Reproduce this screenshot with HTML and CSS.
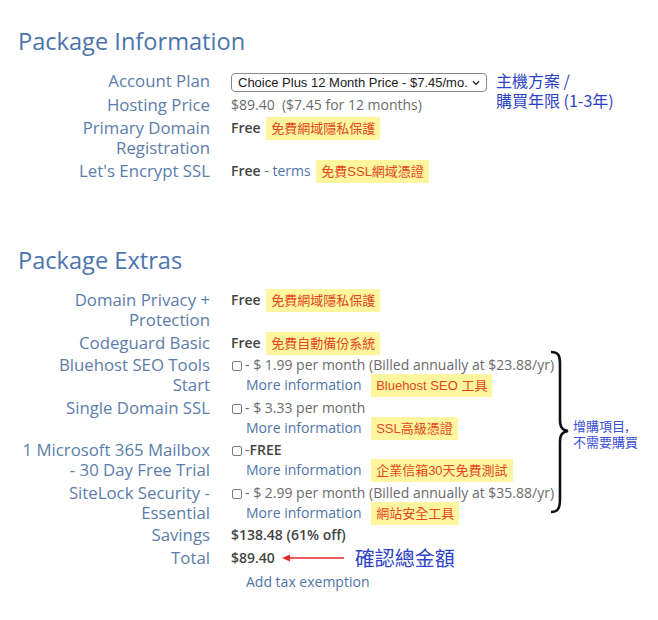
FILE: index.html
```html
<!DOCTYPE html>
<html lang="zh-Hant">
<head>
<meta charset="utf-8">
<title>Package Information</title>
<link rel="stylesheet" href="styles.css">
</head>
<body>
<div class="page">
  <section class="section first">
    <h2 class="title">Package Information</h2>
    <div class="rows">
      <div class="lbl">Account Plan</div>
      <div class="val">
        <div class="select"><span>Choice Plus 12 Month Price - $7.45/mo.</span><svg class="chev" width="8" height="6" viewBox="0 0 8 6"><path d="M1 1.2 L4 4.4 L7 1.2" fill="none" stroke="#333" stroke-width="1.5"/></svg></div>
      </div>
      <div class="lbl">Hosting Price</div>
      <div class="val gray">$89.40&nbsp; ($7.45 for 12 months)</div>
      <div class="lbl">Primary Domain<br>Registration</div>
      <div class="val"><span class="strong">Free</span> <span class="hl">免費網域隱私保護</span></div>
      <div class="lbl">Let's Encrypt SSL</div>
      <div class="val"><span class="strong">Free</span> <span class="gray">-</span> <span class="link">terms</span> <span class="hl">免費SSL網域憑證</span></div>
    </div>
    <div class="note note-plan">主機方案 /<br>購買年限 (1-3年)</div>
  </section>

  <section class="section second">
    <h2 class="title">Package Extras</h2>
    <div class="rows">
      <div class="lbl">Domain Privacy +<br>Protection</div>
      <div class="val"><span class="strong">Free</span> <span class="hl">免費網域隱私保護</span></div>
      <div class="lbl">Codeguard Basic</div>
      <div class="val"><span class="strong">Free</span> <span class="hl">免費自動備份系統</span></div>
      <div class="lbl">Bluehost SEO Tools<br>Start</div>
      <div class="val">
        <div class="gray"><span class="cb"></span>- $ 1.99 per month (Billed annually at $23.88/yr)</div>
        <div class="more"><span class="link">More information</span> <span class="hl">Bluehost SEO 工具</span></div>
      </div>
      <div class="lbl">Single Domain SSL</div>
      <div class="val">
        <div class="gray"><span class="cb"></span>- $ 3.33 per month</div>
        <div class="more"><span class="link">More information</span> <span class="hl">SSL高級憑證</span></div>
      </div>
      <div class="lbl">1 Microsoft 365 Mailbox<br>- 30 Day Free Trial</div>
      <div class="val">
        <div class="gray"><span class="cb"></span>-<span class="strong">FREE</span></div>
        <div class="more"><span class="link">More information</span> <span class="hl">企業信箱30天免費測試</span></div>
      </div>
      <div class="lbl">SiteLock Security -<br>Essential</div>
      <div class="val">
        <div class="gray"><span class="cb"></span>- $ 2.99 per month (Billed annually at $35.88/yr)</div>
        <div class="more"><span class="link">More information</span> <span class="hl">網站安全工具</span></div>
      </div>
      <div class="lbl">Savings</div>
      <div class="val strong">$138.48 (61% off)</div>
      <div class="lbl">Total</div>
      <div class="val total">
        <span class="strong">$89.40</span>
        <svg class="arrow" width="64" height="10" viewBox="0 0 64 10"><path d="M8 5 H63" stroke="#e02a2a" stroke-width="1.6"/><path d="M1 5 L9 1.5 L9 8.5 Z" fill="#e02a2a"/></svg>
        <span class="note-total">確認總金額</span>
      </div>
      <div class="lbl"></div>
      <div class="val taxrow"><span class="link tax">Add tax exemption</span></div>
    </div>
    <svg class="brace" width="24" height="164" viewBox="0 0 24 164"><path d="M2 2 C9 2 11 5 11 14 L11 70 C11 77 13 80 19 81 C13 82 11 85 11 92 L11 149 C11 158 9 162 2 162" fill="none" stroke="#111" stroke-width="2.6"/></svg>
    <div class="note note-extra">增購項目,<br>不需要購買</div>
  </section>
</div>
</body>
</html>
```

FILE: styles.css
```css
* { box-sizing: border-box; }
html, body { margin: 0; padding: 0; background: #fff; }
body {
  font-family: "Open Sans", "Noto Sans CJK TC", sans-serif;
}
.page {
  position: relative;
  width: 658px;
  padding-top: 26px;
}
.section { position: relative; }
.second { margin-top: 64px; }
.title {
  margin: 0 0 15px 18px;
  font-size: 23.6px;
  line-height: 30px;
  font-weight: 400;
  color: #4c74ad;
}
.rows {
  display: grid;
  grid-template-columns: 192px auto;
  column-gap: 21px;
  row-gap: 3px;
  padding-left: 18px;
  align-items: start;
}
.second .rows { row-gap: 2.5px; }
.lbl {
  text-align: right;
  font-size: 16.8px;
  line-height: 20px;
  color: #5b7dab;
  white-space: nowrap;
}
.val {
  font-size: 14px;
  line-height: 20px;
  color: #444;
  white-space: nowrap;
}
.gray { color: #6b6b6b; }
.strong { font-weight: 600; color: #444; }
.link { color: #4f74a8; }
.more { padding-left: 15px; }
.hl {
  background: #fdf69f;
  color: #e3461d;
  font-family: "Liberation Sans", "Noto Sans CJK TC", sans-serif;
  font-size: 13px;
  line-height: 14px;
  padding: 4px 5px;
  margin-left: 2px;
}
.more .hl { margin-left: 6px; }
.cb {
  display: inline-block;
  width: 10px;
  height: 10px;
  border: 1px solid #7a7a7a;
  border-radius: 2px;
  margin: 0 3px 0 1px;
  vertical-align: -1px;
}
.select {
  display: inline-flex;
  align-items: center;
  justify-content: space-between;
  width: 256px;
  height: 19px;
  margin-top: 2px;
  padding: 0 6px 0 6px;
  border: 1px solid #8a8a8a;
  border-radius: 4px;
  font-family: "Liberation Sans", Arial, sans-serif;
  font-size: 13px;
  line-height: 17px;
  color: #222;
  vertical-align: top;
}
.chev { flex: none; margin-left: 4px; }
.note {
  position: absolute;
  font-family: "Noto Sans CJK TC", sans-serif;
  color: #2d43c6;
}
.note-plan {
  left: 496px;
  top: 44px;
  font-size: 16px;
  line-height: 20px;
}
.note-extra {
  left: 573px;
  top: 173px;
  font-size: 13px;
  line-height: 16px;
  color: #3a50d4;
}
.brace {
  position: absolute;
  left: 549px;
  top: 105px;
}
.total { display: flex; align-items: center; height: 20px; }
.arrow { margin-left: 6px; }
.note-total {
  margin-left: 10px;
  font-family: "Noto Sans CJK TC", sans-serif;
  font-size: 20px;
  line-height: 20px;
  color: #2d43c6;
}
.taxrow { margin-top: 1.5px; }
.tax { padding-left: 15px; }
```
